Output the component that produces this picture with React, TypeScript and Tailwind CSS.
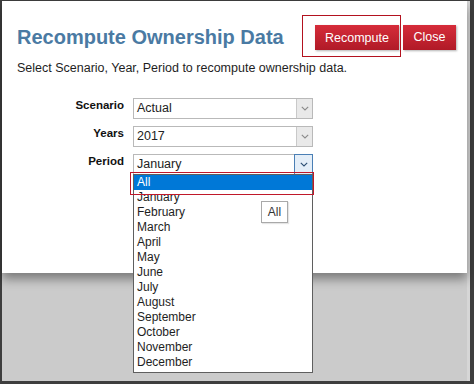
import React from 'react';

const months = [
  'January', 'February', 'March', 'April', 'May', 'June',
  'July', 'August', 'September', 'October', 'November', 'December',
];

// small chevron used on the select arrow buttons
const Chevron: React.FC<{ color: string }> = ({ color }) => (
  <svg width="8" height="5" viewBox="0 0 8 5" fill="none">
    <path d="M0.8 0.8 L4 4 L7.2 0.8" stroke={color} strokeWidth="1.1" />
  </svg>
);

const FakeSelect: React.FC<{ value: string; open?: boolean }> = ({ value, open }) => (
  <div className="relative w-[180px] h-[21px] flex items-center bg-white border border-[#b9b9b9]">
    <span className="flex-1 pl-[3px] text-[12.5px] text-[#222] leading-none">{value}</span>
    {open ? (
      <div className="w-[17px] h-full flex items-center justify-center bg-[#e4eef8] border border-[#4a7fb5] -mr-px -my-px box-content">
        <Chevron color="#2d4f74" />
      </div>
    ) : (
      <div className="w-[16px] h-[19px] flex items-center justify-center bg-[#e9e9e9] border-l border-[#c9c9c9]">
        <Chevron color="#8a8a8a" />
      </div>
    )}
  </div>
);

const App: React.FC = () => {
  return (
    <div
      className="w-[474px] h-[384px] bg-[#3e3e3e] pt-px pl-[2px] pr-[4px] pb-[3px] overflow-hidden"
      style={{ fontFamily: '"Liberation Sans", Arial, sans-serif' }}
    >
      <div className="w-full h-full flex flex-col border-r-[3px] border-[#d6d6d6]">
        {/* Modal */}
        <div className="relative z-10 h-[272px] bg-white shadow-[0_6px_10px_rgba(0,0,0,0.4)] pl-[15px] pr-[11px] pt-[24px]">
          <div className="flex items-center h-[25px]">
            <h1 className="text-[20px] leading-[23px] font-bold text-[#4a7aa3]">Recompute Ownership Data</h1>
            <div className="ml-auto flex gap-[4px]">
              <div className="relative">
                <button className="h-[25px] w-[84px] text-[12.5px] text-white bg-gradient-to-b from-[#d62c3a] to-[#b01a27] shadow-[1px_1px_2px_rgba(0,0,0,0.3)]">
                  Recompute
                </button>
                <div className="absolute -left-[13px] -top-[10px] -right-[2px] -bottom-[7px] border-[1.5px] border-[#b3121f] pointer-events-none" />
              </div>
              <button className="h-[25px] w-[53px] text-[12.5px] text-white bg-gradient-to-b from-[#d62c3a] to-[#b01a27] shadow-[1px_1px_2px_rgba(0,0,0,0.3)]">
                Close
              </button>
            </div>
          </div>

          <p className="mt-[11px] text-[12.5px] leading-[15px] text-[#1e1e1e]">
            Select Scenario, Year, Period to recompute ownership data.
          </p>

          <div className="mt-[22px] flex flex-col gap-[7px]">
            <div className="flex items-start gap-[9px]">
              <label className="w-[107px] text-right text-[11.5px] leading-[14px] font-bold text-[#111]">Scenario</label>
              <FakeSelect value="Actual" />
            </div>
            <div className="flex items-start gap-[9px]">
              <label className="w-[107px] text-right text-[11.5px] leading-[14px] font-bold text-[#111]">Years</label>
              <FakeSelect value="2017" />
            </div>
            <div className="flex items-start gap-[9px]">
              <label className="w-[107px] text-right text-[11.5px] leading-[14px] font-bold text-[#111]">Period</label>
              <div className="relative">
                <FakeSelect value="January" open />
                {/* open dropdown list */}
                <div className="absolute z-20 left-0 top-[20px] w-[180px] pb-[2px] bg-white border border-[#5f5f5f]">
                  <div className="relative h-[15px] bg-[#0078d7] pl-[3px] text-[12px] leading-[15px] text-white">
                    All
                    <div className="absolute -left-[4px] -top-[3px] -right-[2px] -bottom-[5px] border-[1.5px] border-[#c0182a]" />
                  </div>
                  {months.map((m) => (
                    <div key={m} className="h-[15px] pl-[3px] text-[12px] leading-[15px] text-[#1e1e1e]">
                      {m}
                    </div>
                  ))}
                  <div className="absolute left-[127px] top-[26px] w-[27px] h-[22px] flex items-center justify-center bg-white border border-[#a9a9a9] text-[12px] text-[#333] shadow-[1px_1px_1px_rgba(0,0,0,0.1)]">
                    All
                  </div>
                </div>
              </div>
            </div>
          </div>
        </div>

        {/* Backdrop below the modal */}
        <div className="flex-1 bg-[#cbcbcb]" />
      </div>
    </div>
  );
};

export default App;
